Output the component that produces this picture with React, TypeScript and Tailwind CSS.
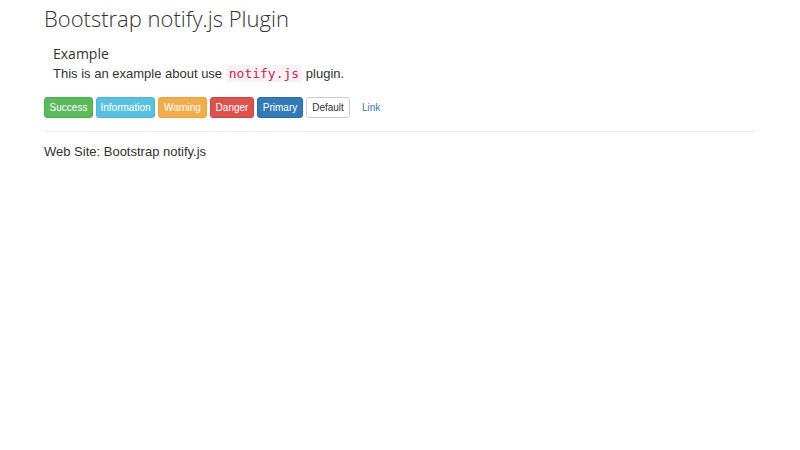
import React from "react";

const btns = [
  { t: "Success", c: "bg-[#5cb85c] border-[#4cae4c] text-white w-[49px]" },
  { t: "Information", c: "bg-[#5bc0de] border-[#46b8da] text-white w-[59px]" },
  { t: "Warning", c: "bg-[#f0ad4e] border-[#eea236] text-white w-[49px]" },
  { t: "Danger", c: "bg-[#d9534f] border-[#d43f3a] text-white w-[44px]" },
  { t: "Primary", c: "bg-[#337ab7] border-[#2e6da4] text-white w-[46px]" },
  { t: "Default", c: "bg-white border-[#ccc] text-[#333] w-[44px]" },
];

export default function App() {
  return (
    <div className="w-[800px] h-[450px] bg-white text-[#333] font-['Liberation_Sans',Arial,sans-serif]">
      <div className="mx-[44px] pt-[5px]">
        <h1 className="font-['Open_Sans',sans-serif] font-light text-[22px] leading-[26px]">Bootstrap notify.js Plugin</h1>
        <div className="pl-[9px] mt-[14px]">
          <h2 className="font-['Open_Sans',sans-serif] text-[14px] leading-[18px]">Example</h2>
          <p className="text-[13px] leading-[18px] mt-[2px]">
            This is an example about use{" "}
            <code className="font-['DejaVu_Sans_Mono',monospace] text-[#c7254e] bg-[#f9f2f4] text-[13px] px-[3px] py-[1px] rounded-[3px]">notify.js</code>{" "}
            plugin.
          </p>
        </div>
        <div className="flex items-center gap-[3px] mt-[14px]">
          {btns.map((b) => (
            <button key={b.t} className={`h-[21px] border rounded-[3px] text-[10px] flex items-center justify-center ${b.c}`}>
              {b.t}
            </button>
          ))}
          <span className="text-[10px] text-[#337ab7] ml-[9px]">Link</span>
        </div>
        <div className="border-t border-[#eee] mt-[13px]" />
        <p className="text-[13px] leading-[18px] mt-[11px]">Web Site: Bootstrap notify.js</p>
      </div>
    </div>
  );
}
